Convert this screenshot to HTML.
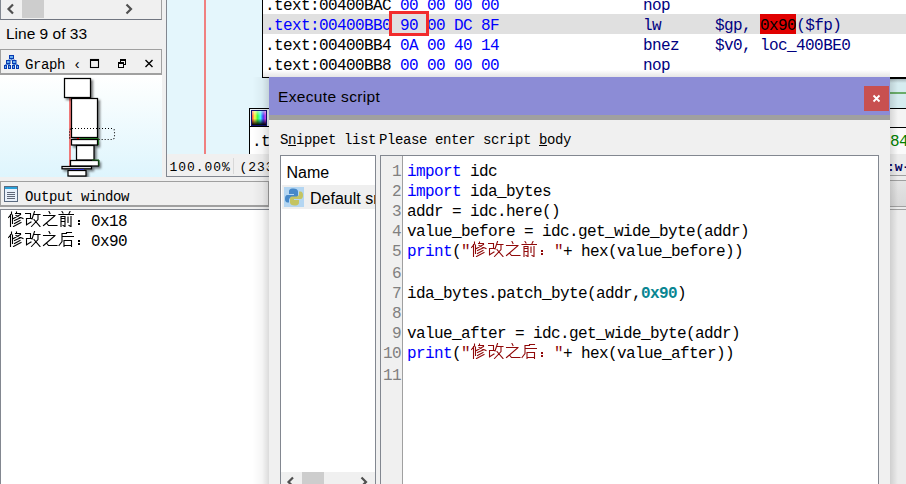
<!DOCTYPE html>
<html><head><meta charset="utf-8"><style>
*{margin:0;padding:0;box-sizing:border-box}
html,body{width:906px;height:484px;overflow:hidden;background:#f0f0f0;position:relative;font-family:"Liberation Sans",sans-serif}
.a{position:absolute}
.mono{font-family:"Liberation Mono",monospace;white-space:pre;font-size:14px;letter-spacing:-0.4px;line-height:16px}
.code{font-family:"Liberation Mono",monospace;font-size:16px;letter-spacing:-0.6px;white-space:pre;line-height:20px;height:20px;position:absolute}
.bl{color:#0000ff}
.nv{color:#000080}
.rd{color:#900a0a}
.tl{color:#098692;font-weight:bold}
.cj{display:inline-block;vertical-align:top;height:20px;position:relative}
.cj svg{position:absolute}
</style></head><body>
<svg style="display:none"><defs>
<symbol id="xiu" viewBox="0 0 16 16"><path fill="none" stroke="currentColor" stroke-width="1.1" stroke-linecap="square" d="M3.5 1 V3 M3 3.5 L0.5 6.5 M2.5 3.5 V15.5 M4.5 4 V12.5 M8.5 1 V2.5 M7.5 2.5 H12.5 V3.5 M12.5 3.5 L5.5 7.5 M8 4.5 L15 7.5 M12 7 L6.5 9.5 M12 9.5 L6.5 12.5 M13 11.5 L5.5 15.5"/></symbol>
<symbol id="gai" viewBox="0 0 16 16"><path fill="none" stroke="currentColor" stroke-width="1.1" stroke-linecap="square" d="M0.5 2.5 H5.5 V7 M1.5 7.5 H6.5 M1.5 7.5 V14 M2 13.5 L6 11 M9.5 0.5 L7 8 M8.5 3.5 H15 M13 3.5 V8.5 L6.5 15.5 M9 8.5 L15 15.5"/></symbol>
<symbol id="zhi" viewBox="0 0 16 16"><path fill="none" stroke="currentColor" stroke-width="1.1" stroke-linecap="square" d="M7 0.5 L8 2.5 M1.5 4.5 H13 M12.5 5 L1.5 14.5 M4.5 12 L6.5 14.5 H15"/></symbol>
<symbol id="qian" viewBox="0 0 16 16"><path fill="none" stroke="currentColor" stroke-width="1.1" stroke-linecap="square" d="M4 0.5 L5 2 M12 0.5 L11 2.5 M1 3.5 H15.5 M3 5.5 V15.5 M3 5.5 H7 V15.5 L5 14.5 M3 7.5 H7 M3 10.5 H7 M10 6 V11.5 M13 5.5 V15.5 L11 14.5"/></symbol>
<symbol id="hou" viewBox="0 0 16 16"><path fill="none" stroke="currentColor" stroke-width="1.1" stroke-linecap="square" d="M4 2.5 H8.5 V1.5 H13.5 M4 2.5 V10.5 L1 14.5 M4 5.5 H15.5 M6 9.5 H13.5 V15.5 M6 9.5 V15.5 M6 14.5 H13.5"/></symbol>
<symbol id="col" viewBox="0 0 16 16"><g fill="currentColor"><rect x="3" y="9" width="2" height="2"/><rect x="3" y="12" width="2" height="2"/></g></symbol>
</defs></svg>
<div class="a" style="left:0;top:0;width:162px;height:20px;background:#f0f0f0;border-left:1px solid #828790;border-right:1px solid #a0a0a0;border-bottom:1px solid #707580"></div>
<div class="a" style="left:22px;top:0;width:22px;height:18px;background:#cdcdcd"></div>
<svg class="a" style="left:0;top:0" width="162" height="20"><path d="M13 4.5 L8.5 9 L13 13.5" stroke="#505050" stroke-width="2.2" fill="none"/><path d="M126.5 4.5 L131 9 L126.5 13.5" stroke="#505050" stroke-width="2.2" fill="none"/></svg>
<div class="a" style="left:6px;top:25px;font-size:15.5px;color:#000">Line 9 of 33</div>
<div class="a" style="left:0;top:49px;width:162px;height:26px;border:1px solid #a0a0a0;border-bottom:2px solid #a0a0a0;background:#f0f0f0"></div>
<svg class="a" style="left:4px;top:55px" width="16" height="15">
<path d="M7.5 3.5 V5 M4 5 H11 M4 9 V10 M1.5 9.5 H6 M1.5 9.5 V10 M5.5 9.5 V10 M11 9 V10 M9 9.5 H13.5 M9 9.5 V10 M13.5 9.5 V10" stroke="#3070d0" stroke-width="0.8" fill="none"/>
<g fill="#68b0f0" stroke="#0838b0" stroke-width="1">
<rect x="5.5" y="0.5" width="4" height="3"/><rect x="2.5" y="5.5" width="3.5" height="3"/><rect x="8.5" y="5.5" width="3.5" height="3"/>
<rect x="0.5" y="10.5" width="2" height="3"/><rect x="4.5" y="10.5" width="2" height="3"/><rect x="8.5" y="10.5" width="2" height="3"/><rect x="12.5" y="10.5" width="2" height="3"/>
</g></svg>
<div class="a mono" style="left:25px;top:57px;color:#000">Graph &#8249;</div>
<svg class="a" style="left:0;top:49px" width="162" height="26">
<rect x="90.5" y="10.5" width="8" height="8" fill="none" stroke="#000" stroke-width="1.1"/><rect x="90" y="10" width="9" height="2" fill="#000"/>
<rect x="120.5" y="10.5" width="5" height="5" fill="none" stroke="#000"/><rect x="120" y="10" width="6" height="2" fill="#000"/><rect x="118.5" y="13.5" width="5" height="5" fill="#f0f0f0" stroke="#000"/><rect x="118" y="13" width="6" height="2" fill="#000"/>
<path d="M145.5 11 L152.5 18 M152.5 11 L145.5 18" stroke="#000" stroke-width="1.4"/></svg>
<div class="a" style="left:0;top:75px;width:162px;height:102px;background:linear-gradient(#ffffff,#f8fdfe 20%,#def5fd)"></div>
<svg class="a" style="left:0;top:75px" width="162" height="102">
<rect x="69" y="23" width="2" height="68" fill="#f07878"/>
<g fill="#fff" stroke="#000" stroke-width="1.25" style="filter:drop-shadow(2px 2px 1.2px rgba(0,0,0,.5))">
<rect x="64.5" y="3.5" width="26" height="19"/>
<rect x="71.5" y="23.5" width="26" height="39"/>
<rect x="71.5" y="64.5" width="26" height="5.5"/>
<rect x="76.5" y="70.5" width="17.5" height="14.5"/>
<rect x="70.5" y="85.5" width="28" height="5.5"/>
<rect x="62" y="91.5" width="29.5" height="2.3"/>
<rect x="68" y="95.5" width="18" height="5.5"/>
</g>
<path d="M80 63.5 H98.5 V70" stroke="#207020" stroke-width="1" fill="none"/>
<path d="M92 85 H99 V91" stroke="#207020" stroke-width="1" fill="none"/>
<rect x="77" y="63" width="2" height="1" fill="#e00000"/>
<rect x="69.5" y="53.5" width="45" height="11" rx="2.5" fill="none" stroke="#000" stroke-width="1.1" stroke-dasharray="1 2"/>
<path d="M70 94.5 H84" stroke="#3030d0" stroke-width="1"/></svg>
<div class="a" style="left:166px;top:0;width:1px;height:177px;background:#828790"></div>
<div class="a" style="left:167px;top:0;width:739px;height:154px;background:#e4f6fc"></div>
<div class="a" style="left:204px;top:0;width:2px;height:154px;background:#f08080"></div>
<div class="a" style="left:262px;top:0;width:644px;height:78px;background:#fff;border-left:1px solid #000;border-bottom:1px solid #000"></div>
<div class="a" style="left:263px;top:14px;width:643px;height:20px;background:#e0e0e0"></div>
<div class="a" style="left:760px;top:14px;width:36px;height:20px;background:#e00000"></div>
<div class="code" style="left:265px;top:-4px">.text:00400BAC <span class="bl">00 00 00 00</span>                <span class="nv">nop</span></div>
<div class="code" style="left:265px;top:16px"><span class="bl">.text:00400BB0 90 00 DC 8F</span>                <span class="nv">lw      $gp, </span><span style="color:#000">0x90</span><span class="nv">($fp)</span></div>
<div class="code" style="left:265px;top:36px">.text:00400BB4 <span class="bl">0A 00 40 14</span>                <span class="nv">bnez    $v0, loc_400BE0</span></div>
<div class="code" style="left:265px;top:56px">.text:00400BB8 <span class="bl">00 00 00 00</span>                <span class="nv">nop</span></div>
<div class="a" style="left:389px;top:11px;width:40px;height:25px;border:3px solid #f22c2c"></div>
<div class="a" style="left:249px;top:108px;width:20px;height:46px;background:#fff;border-left:1px solid #000;border-top:1px solid #000"></div>
<div class="a" style="left:250px;top:109px;width:19px;height:18px;background:#eef4f6;border-bottom:1px solid #000"></div>
<div class="a" style="left:251px;top:110px;width:16px;height:16px;border:1.5px solid #101070;background:linear-gradient(rgba(255,255,255,.55),rgba(255,255,255,0) 35%,rgba(0,0,0,0) 55%,#000),linear-gradient(90deg,#f44,#ff4,#4f4,#4ff,#44f,#f4f)"></div>
<div class="code" style="left:252px;top:132px">.t</div>
<div class="a" style="left:166px;top:154px;width:103px;height:23px;background:#f0f0f0;border-left:1px solid #828790;border-bottom:1px solid #828790"></div>
<div class="a" style="left:233px;top:158px;width:1px;height:16px;background:#d8d8d8"></div>
<div class="a mono" style="left:169.5px;top:160px;font-size:13px;letter-spacing:0.95px;color:#000">100.00% (233</div>
<div class="a" style="left:0;top:181px;width:269px;height:26px;border:1px solid #a0a0a0;border-bottom:2px solid #a0a0a0;background:#f0f0f0"></div>
<svg class="a" style="left:4px;top:186px" width="15" height="17">
<rect x="0.5" y="0.5" width="13" height="15" fill="#e8f0fa" stroke="#5a6a80"/><rect x="1" y="1" width="12" height="2" fill="#2aa0d8"/>
<path d="M3 6.5 H11 M3 8.5 H11 M3 10.5 H11 M3 12.5 H11" stroke="#606878" stroke-width="1"/></svg>
<div class="a mono" style="left:25px;top:189px;color:#000">Output window</div>
<div class="a" style="left:0;top:209px;width:269px;height:275px;background:#fff;border-top:1px solid #828790;border-left:1px solid #828790"></div>
<div class="a" style="left:8px;top:211px;color:#000"><svg style="position:absolute;left:0px;top:0px" width="16" height="16"><use href="#xiu"/></svg><svg style="position:absolute;left:17px;top:0px" width="16" height="16"><use href="#gai"/></svg><svg style="position:absolute;left:34px;top:0px" width="16" height="16"><use href="#zhi"/></svg><svg style="position:absolute;left:50px;top:0px" width="16" height="16"><use href="#qian"/></svg><svg style="position:absolute;left:67px;top:0px" width="16" height="16"><use href="#col"/></svg></div>
<div class="a" style="left:8px;top:231px;color:#000"><svg style="position:absolute;left:0px;top:0px" width="16" height="16"><use href="#xiu"/></svg><svg style="position:absolute;left:17px;top:0px" width="16" height="16"><use href="#gai"/></svg><svg style="position:absolute;left:34px;top:0px" width="16" height="16"><use href="#zhi"/></svg><svg style="position:absolute;left:50px;top:0px" width="16" height="16"><use href="#hou"/></svg><svg style="position:absolute;left:67px;top:0px" width="16" height="16"><use href="#col"/></svg></div>
<div class="code" style="left:91px;top:212px;color:#000">0x18</div>
<div class="code" style="left:91px;top:232px;color:#000">0x90</div>
<div class="a" style="left:252px;top:77px;width:17px;height:407px;background:linear-gradient(90deg,rgba(0,0,0,0),rgba(0,0,0,0.04) 60%,rgba(0,0,0,0.14))"></div>
<div class="a" style="left:890px;top:77px;width:8px;height:407px;background:linear-gradient(90deg,rgba(0,0,0,0.08),rgba(0,0,0,0))"></div>
<div class="a" style="left:263px;top:70px;width:627px;height:7px;background:linear-gradient(rgba(0,0,0,0),rgba(0,0,0,0.10))"></div>
<div class="a" style="left:269px;top:77px;width:621px;height:407px;background:#f0f0f0"></div>
<div class="a" style="left:269px;top:77px;width:621px;height:38px;background:#8c8cd6"></div>
<div class="a" style="left:269px;top:115px;width:621px;height:5px;background:#a0a0a0"></div>
<div class="a" style="left:278px;top:88px;font-size:15.5px;letter-spacing:0.35px;color:#000">Execute script</div>
<div class="a" style="left:864px;top:86px;width:25px;height:25px;background:#c85050"></div>
<svg class="a" style="left:864px;top:86px" width="25" height="25"><path d="M9.5 9.5 L15.5 15.5 M15.5 9.5 L9.5 15.5" stroke="#fff" stroke-width="1.8"/></svg>
<div class="a mono" style="left:280px;top:132px">S<u>n</u>ippet list</div>
<div class="a mono" style="left:379px;top:132px">Please enter script <u>b</u>ody</div>
<div class="a" style="left:280px;top:155px;width:96px;height:340px;background:#fff;border:1px solid #828790"></div>
<div class="a" style="left:286.5px;top:164px;font-size:16px">Name</div>
<div class="a" style="left:282px;top:185px;width:93px;height:24px;background:#efefef"></div>
<svg class="a" style="left:284px;top:187px" width="20" height="20"><rect x="0" y="0" width="20" height="20" fill="#b4d6f2"/>
<path d="M9.5 1.5 C5 1.5 5 3.5 5 5 V7 H10 V8 H3.5 C1.5 8 1 10 1 12 C1 14 2 15.5 3.5 15.5 H5 V13 C5 11.5 6 10.5 7.5 10.5 H12 C13.5 10.5 14 9.5 14 8 V4.5 C14 2.5 12 1.5 9.5 1.5Z" fill="#4688c8"/>
<path d="M10.5 18.5 C15 18.5 15 16.5 15 15 V13 H10 V12 H16.5 C18.5 12 19 10 19 8 C19 6 18 4.5 16.5 4.5 H15 V7 C15 8.5 14 9.5 12.5 9.5 H8 C6.5 9.5 6 10.5 6 12 V15.5 C6 17.5 8 18.5 10.5 18.5Z" fill="#c4c462"/></svg>
<div class="a" style="left:310px;top:190px;width:65px;height:20px;overflow:hidden;font-size:16px;white-space:pre">Default sn</div>
<div class="a" style="left:281px;top:472px;width:94px;height:12px;background:#f0f0f0"></div>
<div class="a" style="left:302px;top:472px;width:22px;height:12px;background:#cdcdcd"></div>
<svg class="a" style="left:281px;top:472px" width="94" height="12"><path d="M12 5.5 L7.5 10 L12 14.5" stroke="#505050" stroke-width="2.2" fill="none"/><path d="M80.5 5.5 L85 10 L80.5 14.5" stroke="#505050" stroke-width="2.2" fill="none"/></svg>
<div class="a" style="left:380px;top:155px;width:499px;height:340px;background:#fff;border:1px solid #828790"></div>
<div class="a" style="left:381px;top:156px;width:22px;height:328px;background:#f0f0f0;border-right:1px solid #a0a0a0"></div>
<div class="code" style="left:381px;top:162px;width:20px;text-align:right;color:#808080">1</div>
<div class="code" style="left:407px;top:162px;color:#000"><span class="bl">import</span> idc</div>
<div class="code" style="left:381px;top:182px;width:20px;text-align:right;color:#808080">2</div>
<div class="code" style="left:407px;top:182px;color:#000"><span class="bl">import</span> ida_bytes</div>
<div class="code" style="left:381px;top:202px;width:20px;text-align:right;color:#808080">3</div>
<div class="code" style="left:407px;top:202px;color:#000">addr = idc.here()</div>
<div class="code" style="left:381px;top:222px;width:20px;text-align:right;color:#808080">4</div>
<div class="code" style="left:407px;top:222px;color:#000">value_before = idc.get_wide_byte(addr)</div>
<div class="code" style="left:381px;top:242px;width:20px;text-align:right;color:#808080">5</div>
<div class="code" style="left:407px;top:242px;color:#000"><span class="bl">print</span>(<span class="rd">"</span><span class="cj rd" style="width:84px"><svg style="position:absolute;left:1px;top:-1px" width="16" height="16"><use href="#xiu"/></svg><svg style="position:absolute;left:18px;top:-1px" width="16" height="16"><use href="#gai"/></svg><svg style="position:absolute;left:35px;top:-1px" width="16" height="16"><use href="#zhi"/></svg><svg style="position:absolute;left:51px;top:-1px" width="16" height="16"><use href="#qian"/></svg><svg style="position:absolute;left:68px;top:-1px" width="16" height="16"><use href="#col"/></svg></span><span class="rd">"</span>+ hex(value_before))</div>
<div class="code" style="left:381px;top:264px;width:20px;text-align:right;color:#808080">6</div>
<div class="code" style="left:381px;top:284px;width:20px;text-align:right;color:#808080">7</div>
<div class="code" style="left:407px;top:284px;color:#000">ida_bytes.patch_byte(addr,<span class="tl">0x90</span>)</div>
<div class="code" style="left:381px;top:304px;width:20px;text-align:right;color:#808080">8</div>
<div class="code" style="left:381px;top:324px;width:20px;text-align:right;color:#808080">9</div>
<div class="code" style="left:407px;top:324px;color:#000">value_after = idc.get_wide_byte(addr)</div>
<div class="code" style="left:381px;top:344px;width:20px;text-align:right;color:#808080">10</div>
<div class="code" style="left:407px;top:344px;color:#000"><span class="bl">print</span>(<span class="rd">"</span><span class="cj rd" style="width:84px"><svg style="position:absolute;left:1px;top:-1px" width="16" height="16"><use href="#xiu"/></svg><svg style="position:absolute;left:18px;top:-1px" width="16" height="16"><use href="#gai"/></svg><svg style="position:absolute;left:35px;top:-1px" width="16" height="16"><use href="#zhi"/></svg><svg style="position:absolute;left:51px;top:-1px" width="16" height="16"><use href="#hou"/></svg><svg style="position:absolute;left:68px;top:-1px" width="16" height="16"><use href="#col"/></svg></span><span class="rd">"</span>+ hex(value_after))</div>
<div class="code" style="left:381px;top:366px;width:20px;text-align:right;color:#808080">11</div>
<div class="a" style="left:890px;top:77px;width:16px;height:407px;background:#ececec;overflow:hidden">
<div class="a" style="left:0;top:0;width:16px;height:2px;background:#000"></div>
<div class="a" style="left:0;top:2px;width:16px;height:29px;background:linear-gradient(#a8b8bc,#d6ecf0 4px,#d6ecf0)"></div>
<div class="a" style="left:0;top:15px;width:16px;height:2px;background:#6aac6a"></div>
<div class="a" style="left:0;top:31px;width:16px;height:1px;background:#000"></div>
<div class="a" style="left:0;top:32px;width:16px;height:18px;background:#f4f4f4"></div>
<div class="a" style="left:0;top:50px;width:16px;height:1px;background:#000"></div>
<div class="a" style="left:0;top:51px;width:16px;height:26px;background:#fafafa"></div>
<div class="a" style="left:0;top:77px;width:16px;height:22px;background:#ebebeb"></div>
<div class="a" style="left:0;top:98px;width:16px;height:1px;background:#a0a0a0"></div>
<div class="a" style="left:0;top:103px;width:16px;height:1px;background:#a0a0a0"></div>
<div class="a" style="left:0;top:104px;width:16px;height:26px;background:linear-gradient(#e4e4e4,#d8d8d8)"></div>
<div class="a" style="left:0;top:129px;width:16px;height:1px;background:#a0a0a0"></div>
<div class="a" style="left:0;top:132px;width:16px;height:1px;background:#a0a0a0"></div>
<div class="code" style="left:0px;top:55px;color:#008000">84</div>
<div class="a" style="left:-3px;top:83px;font-family:'Liberation Mono';font-size:13px;line-height:15px;font-weight:bold;color:#000060;white-space:pre">:w-</div>
<div class="a" style="left:0;top:0;width:8px;height:407px;background:linear-gradient(90deg,rgba(0,0,0,0.12),rgba(0,0,0,0))"></div>
</div>
</body></html>
